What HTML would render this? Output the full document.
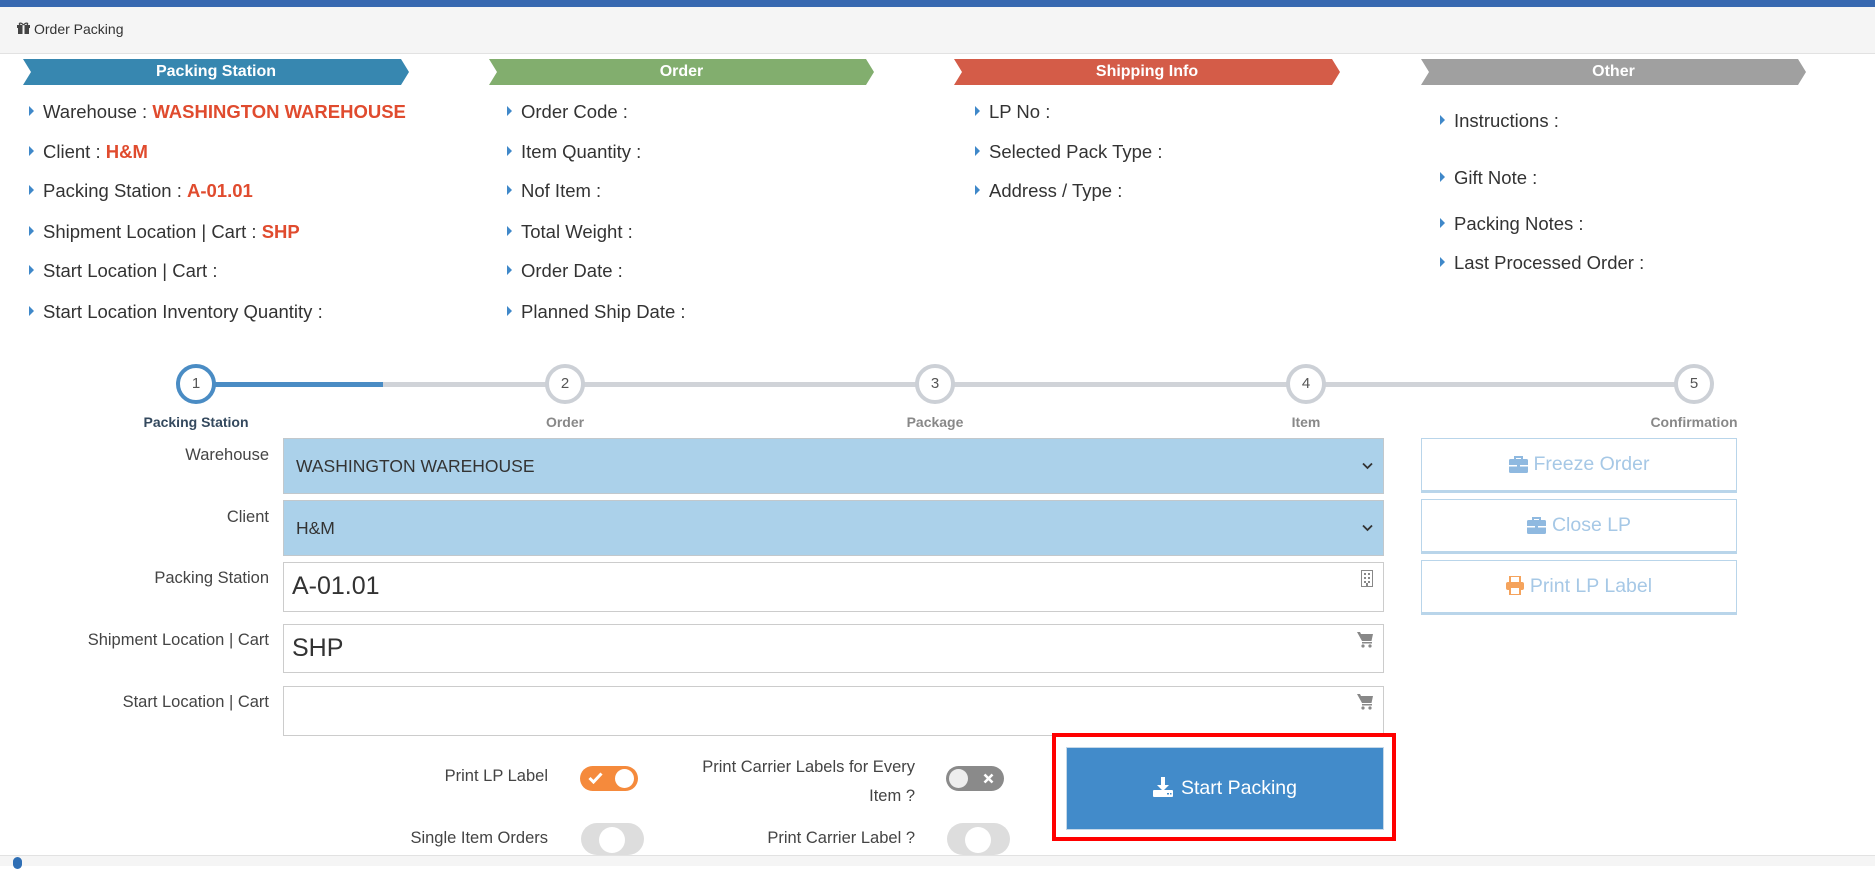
<!DOCTYPE html>
<html><head><meta charset="utf-8"><style>
*{box-sizing:border-box;margin:0;padding:0}
body{width:1875px;height:866px;overflow:hidden;background:#fff;font-family:"Liberation Sans",sans-serif;color:#333;position:relative}
.a{position:absolute}
.rib{position:absolute;top:59px;height:26px;color:#fff;font-weight:bold;font-size:16px;text-align:center;line-height:26px;clip-path:polygon(0 0,calc(100% - 8px) 0,100% 50%,calc(100% - 8px) 100%,0 100%,8px 50%)}
.li{position:absolute;font-size:18.5px;color:#333;white-space:nowrap}
.li:before{content:"";display:inline-block;width:0;height:0;border-left:5px solid #3f88c9;border-top:5px solid transparent;border-bottom:5px solid transparent;margin-right:9px;vertical-align:2px}
.li b{color:#e04b2e}
.circ{position:absolute;top:364px;width:40px;height:40px;border-radius:50%;border:4px solid #ccd0d6;background:#fff;font-size:15px;text-align:center;line-height:32px;color:#555}
.sl{position:absolute;top:414px;font-size:14px;color:#888;font-weight:bold;text-align:center;width:160px}
.lab{position:absolute;right:1606px;font-size:16.5px;color:#444;white-space:nowrap}
.inp{position:absolute;left:283px;width:1101px;border:1px solid #ccc;background:#fff}
.sel{background:#abd1ea;border-color:#c2c8cc;font-size:17.5px;color:#333;padding-left:12px}
.rb{position:absolute;left:1421px;width:316px;border:1px solid #b9d5ea;border-bottom:3px solid #b9d5ea;font-size:19.5px;color:#a6c8e6;text-align:center}
.rb svg{vertical-align:-3px;margin-right:6px}
.tg{position:absolute;border-radius:14px}
.knob{position:absolute;background:#fff;border-radius:50%}
.tl{position:absolute;font-size:16.5px;color:#444;text-align:right;white-space:nowrap}
.ic{position:absolute;right:10px}
</style></head><body>
<div class="a" style="left:0;top:0;width:1875px;height:7px;background:#3768b0"></div>
<div class="a" style="left:0;top:7px;width:1875px;height:47px;background:#f5f5f5;border-bottom:1px solid #e2e2e2"></div>
<svg class="a" style="left:17px;top:22px" width="13" height="12" viewBox="0 0 13 12"><rect x="0" y="3" width="13" height="3" fill="#444"/><rect x="1" y="6" width="11" height="6" fill="#444"/><rect x="5.5" y="3" width="2" height="9" fill="#f5f5f5"/><path d="M6.5 3C4 0 1 1 3 3M6.5 3C9 0 12 1 10 3" stroke="#444" fill="none" stroke-width="1.3"/></svg>
<div class="a" style="left:34px;top:21px;font-size:14px;color:#333">Order Packing</div>

<div class="rib" style="left:23px;width:386px;background:#3787b0">Packing Station</div>
<div class="rib" style="left:489px;width:385px;background:#82ae6e">Order</div>
<div class="rib" style="left:954px;width:386px;background:#d45c48">Shipping Info</div>
<div class="rib" style="left:1421px;width:385px;background:#a0a0a0">Other</div>

<div class="li" style="left:29px;top:101px">Warehouse : <b>WASHINGTON WAREHOUSE</b></div>
<div class="li" style="left:29px;top:141px">Client : <b>H&amp;M</b></div>
<div class="li" style="left:29px;top:180px">Packing Station : <b>A-01.01</b></div>
<div class="li" style="left:29px;top:221px">Shipment Location | Cart : <b>SHP</b></div>
<div class="li" style="left:29px;top:260px">Start Location | Cart :</div>
<div class="li" style="left:29px;top:301px">Start Location Inventory Quantity :</div>

<div class="li" style="left:507px;top:101px">Order Code :</div>
<div class="li" style="left:507px;top:141px">Item Quantity :</div>
<div class="li" style="left:507px;top:180px">Nof Item :</div>
<div class="li" style="left:507px;top:221px">Total Weight :</div>
<div class="li" style="left:507px;top:260px">Order Date :</div>
<div class="li" style="left:507px;top:301px">Planned Ship Date :</div>

<div class="li" style="left:975px;top:101px">LP No :</div>
<div class="li" style="left:975px;top:141px">Selected Pack Type :</div>
<div class="li" style="left:975px;top:180px">Address / Type :</div>

<div class="li" style="left:1440px;top:110px">Instructions :</div>
<div class="li" style="left:1440px;top:167px">Gift Note :</div>
<div class="li" style="left:1440px;top:213px">Packing Notes :</div>
<div class="li" style="left:1440px;top:252px">Last Processed Order :</div>

<div class="a" style="left:196px;top:382px;width:1498px;height:5px;background:#d0d3d8"></div>
<div class="a" style="left:196px;top:382px;width:187px;height:5px;background:#4a8cc4"></div>
<div class="circ" style="left:176px;border-color:#4a8cc4">1</div>
<div class="circ" style="left:545px">2</div>
<div class="circ" style="left:915px">3</div>
<div class="circ" style="left:1286px">4</div>
<div class="circ" style="left:1674px">5</div>
<div class="sl" style="left:116px;color:#34495e">Packing Station</div>
<div class="sl" style="left:485px">Order</div>
<div class="sl" style="left:855px">Package</div>
<div class="sl" style="left:1226px">Item</div>
<div class="sl" style="left:1614px">Confirmation</div>

<div class="lab" style="top:446px">Warehouse</div>
<div class="lab" style="top:508px">Client</div>
<div class="lab" style="top:569px">Packing Station</div>
<div class="lab" style="top:631px">Shipment Location | Cart</div>
<div class="lab" style="top:693px">Start Location | Cart</div>

<div class="inp sel" style="top:438px;height:56px;line-height:54px">WASHINGTON WAREHOUSE<svg class="ic" style="top:23px" width="11" height="8" viewBox="0 0 11 8"><path d="M1 1.5L5.5 6L10 1.5" stroke="#333" stroke-width="1.8" fill="none"/></svg></div>
<div class="inp sel" style="top:500px;height:56px;line-height:54px">H&amp;M<svg class="ic" style="top:23px" width="11" height="8" viewBox="0 0 11 8"><path d="M1 1.5L5.5 6L10 1.5" stroke="#333" stroke-width="1.8" fill="none"/></svg></div>
<div class="inp" style="top:562px;height:50px;font-size:25px;padding:9px 0 0 8px">A-01.01<svg class="ic" style="top:7px" width="12" height="17" viewBox="0 0 12 17"><rect x="0.5" y="0.5" width="11" height="16" fill="none" stroke="#888"/><g fill="#888"><rect x="3" y="3" width="2" height="2"/><rect x="7" y="3" width="2" height="2"/><rect x="3" y="7" width="2" height="2"/><rect x="7" y="7" width="2" height="2"/><rect x="3" y="11" width="2" height="2"/><rect x="7" y="11" width="2" height="2"/><rect x="5" y="13" width="2" height="4"/></g></svg></div>
<div class="inp" style="top:624px;height:49px;font-size:25px;padding:9px 0 0 8px">SHP<svg class="ic" style="top:6px" width="16" height="17" viewBox="0 0 16 17"><path d="M0 1h3l1 2h12l-1.5 7H5z" fill="#888"/><rect x="5" y="11" width="10" height="1.5" fill="#888"/><circle cx="6" cy="15" r="1.6" fill="#888"/><circle cx="13" cy="15" r="1.6" fill="#888"/></svg></div>
<div class="inp" style="top:686px;height:50px"><svg class="ic" style="top:6px" width="16" height="17" viewBox="0 0 16 17"><path d="M0 1h3l1 2h12l-1.5 7H5z" fill="#888"/><rect x="5" y="11" width="10" height="1.5" fill="#888"/><circle cx="6" cy="15" r="1.6" fill="#888"/><circle cx="13" cy="15" r="1.6" fill="#888"/></svg></div>

<div class="rb" style="top:438px;height:55px;line-height:50px"><svg width="19" height="17" viewBox="0 0 19 17"><path d="M6 3V1h7v2" stroke="#8fb9e0" stroke-width="2" fill="none"/><rect x="0" y="3" width="19" height="14" rx="1.5" fill="#8fb9e0"/><rect x="0" y="9" width="19" height="1.5" fill="#fff"/><rect x="8" y="8" width="3" height="4" fill="#8fb9e0"/></svg>Freeze Order</div>
<div class="rb" style="top:499px;height:55px;line-height:50px"><svg width="19" height="17" viewBox="0 0 19 17"><path d="M6 3V1h7v2" stroke="#8fb9e0" stroke-width="2" fill="none"/><rect x="0" y="3" width="19" height="14" rx="1.5" fill="#8fb9e0"/><rect x="0" y="9" width="19" height="1.5" fill="#fff"/><rect x="8" y="8" width="3" height="4" fill="#8fb9e0"/></svg>Close LP</div>
<div class="rb" style="top:560px;height:55px;line-height:50px"><svg width="18" height="19" viewBox="0 0 18 19"><rect x="4" y="0" width="10" height="7" fill="none" stroke="#f5a35c" stroke-width="2"/><rect x="0" y="6" width="18" height="8" rx="2" fill="#f5a35c"/><rect x="4" y="11" width="10" height="8" fill="#fff" stroke="#f5a35c" stroke-width="2"/></svg>Print LP Label</div>

<div class="tl" style="right:1327px;top:767px">Print LP Label</div>
<div class="tg" style="left:580px;top:766px;width:58px;height:25px;background:#f58a3c"><svg style="position:absolute;left:8px;top:6px" width="15" height="12" viewBox="0 0 15 12"><path d="M1.5 6l4 4L13.5 1.5" stroke="#fff" stroke-width="3" fill="none"/></svg><div class="knob" style="left:35px;top:3px;width:19px;height:19px"></div></div>
<div class="tl" style="right:960px;top:753px;line-height:29px">Print Carrier Labels for Every<br>Item ?</div>
<div class="tg" style="left:946px;top:766px;width:58px;height:25px;background:#8a8a8a"><div class="knob" style="left:3px;top:3px;width:19px;height:19px;background:#eee"></div><svg style="position:absolute;left:37px;top:7px" width="11" height="11" viewBox="0 0 11 11"><path d="M1.5 1.5l8 8M9.5 1.5l-8 8" stroke="#fff" stroke-width="2.6"/></svg></div>

<div class="tl" style="right:1327px;top:829px">Single Item Orders</div>
<div class="tg" style="left:581px;top:823px;width:63px;height:32px;background:#ddd;border-radius:16px"><div class="knob" style="left:18px;top:4px;width:26px;height:26px"></div></div>
<div class="tl" style="right:960px;top:829px">Print Carrier Label ?</div>
<div class="tg" style="left:947px;top:823px;width:63px;height:32px;background:#ddd;border-radius:16px"><div class="knob" style="left:18px;top:4px;width:26px;height:26px"></div></div>

<div class="a" style="left:1052px;top:733px;width:344px;height:108px;border:4px solid #f00"></div>
<div class="a" style="left:1066px;top:747px;width:318px;height:83px;background:#428bca;border:1px solid #c5d8e8;color:#fff;font-size:19.5px;text-align:center;line-height:81px"><svg width="20" height="20" viewBox="0 0 20 20" style="vertical-align:-3px;margin-right:8px"><path d="M8 0h4v8h4l-6 6-6-6h4z" fill="#fff"/><rect x="0" y="13" width="20" height="7" rx="1" fill="#fff"/><rect x="14" y="16" width="2" height="1.5" fill="#428bca"/><rect x="17" y="16" width="1.5" height="1.5" fill="#428bca"/></svg>Start Packing</div>

<div class="a" style="left:0;top:855px;width:1875px;height:11px;background:#f5f5f5;border-top:1px solid #e2e2e2"></div>
<div class="a" style="left:13px;top:857px;width:9px;height:12px;border-radius:5px;background:#2f6fb5"></div>
</body></html>
